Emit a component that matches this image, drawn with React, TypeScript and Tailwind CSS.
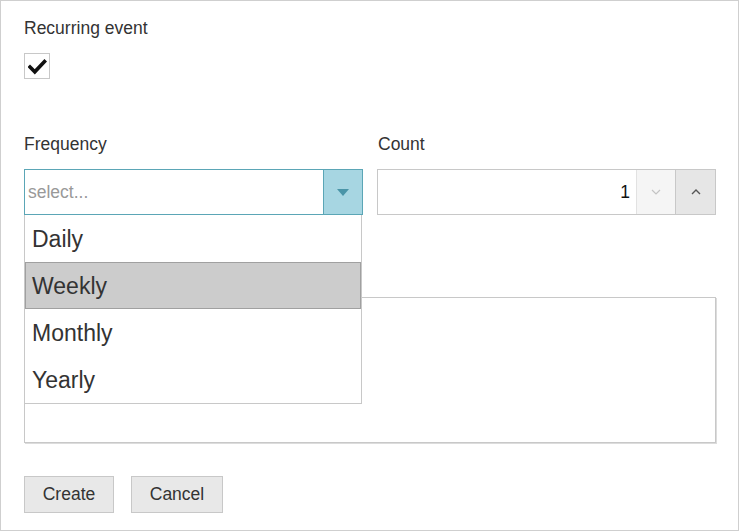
const options = ["Daily", "Weekly", "Monthly", "Yearly"];

function Checkmark() {
  return (
    <svg width="19" height="17" viewBox="0 0 19 17" fill="none">
      <path d="M2 9l4.8 4.8L16.5 3.5" stroke="#111" strokeWidth="3.6" strokeLinecap="square" />
    </svg>
  );
}

export default function App() {
  return (
    <div
      className="w-[739px] h-[531px] border border-[#cfcfcf] bg-white pl-[23px] pr-[22px] text-[#333]"
      style={{ fontFamily: '"Liberation Sans", Arial, sans-serif' }}
    >
      <div className="pt-[18px] text-[17.5px] leading-[18px]">Recurring event</div>
      <div className="mt-[16px] flex h-[26px] w-[26px] items-center justify-center border border-[#c8c8c8] bg-white">
        <Checkmark />
      </div>

      <div className="mt-[56px] flex gap-[14px]">
        <div className="w-[339px]">
          <div className="text-[17.5px] leading-[18px]">Frequency</div>
          <div className="relative mt-[16px]">
            <div className="flex h-[46px] border border-[#5ba6b6]">
              <div className="flex flex-1 items-center pl-[3px] text-[17.5px] text-[#999]">select...</div>
              <div className="flex w-[39px] items-center justify-center border-l border-[#5ba6b6] bg-[#a7d6e2]">
                <svg width="12" height="7" viewBox="0 0 12 7">
                  <path d="M0 0h12L6 7z" fill="#4a95a8" />
                </svg>
              </div>
            </div>
            <ul className="absolute left-0 top-[46px] z-10 w-[338px] border border-t-0 border-[#c8c8c8] bg-white text-[23px] leading-[26px]">
              {options.map((o) => (
                <li
                  key={o}
                  className={
                    o === "Weekly"
                      ? "flex h-[47px] items-center border border-[#a0a0a0] bg-[#cccccc] pl-[6px]"
                      : "flex h-[47px] items-center pl-[7px]"
                  }
                >
                  {o}
                </li>
              ))}
            </ul>
          </div>
        </div>

        <div className="flex-1">
          <div className="pl-[1px] text-[17.5px] leading-[18px]">Count</div>
          <div className="mt-[16px] flex h-[46px] border border-[#c8c8c8]">
            <div className="flex flex-1 items-center justify-end pr-[6px] text-[17.5px] text-[#111]">1</div>
            <div className="flex w-[39px] items-center justify-center border-l border-[#e2e2e2] bg-[#f5f5f5]">
              <svg width="10" height="6" viewBox="0 0 10 6" fill="none">
                <path d="M1 1l4 4 4-4" stroke="#c4c4c4" strokeWidth="1.2" />
              </svg>
            </div>
            <div className="flex w-[40px] items-center justify-center border-l border-[#c8c8c8] bg-[#e6e6e6]">
              <svg width="10" height="6" viewBox="0 0 10 6" fill="none">
                <path d="M1 5l4-4 4 4" stroke="#555" strokeWidth="1.4" />
              </svg>
            </div>
          </div>
        </div>
      </div>

      <div className="mt-[82px] h-[146px] border border-[#c8c8c8] shadow-[1px_1px_0_#dcdcdc]" />

      <div className="mt-[33px] flex gap-[17px]">
        <button className="h-[37px] w-[90px] border border-[#c8c8c8] bg-[#e8e8e8] text-[17.5px] text-[#333]">
          Create
        </button>
        <button className="h-[37px] w-[92px] border border-[#c8c8c8] bg-[#e8e8e8] text-[17.5px] text-[#333]">
          Cancel
        </button>
      </div>
    </div>
  );
}
